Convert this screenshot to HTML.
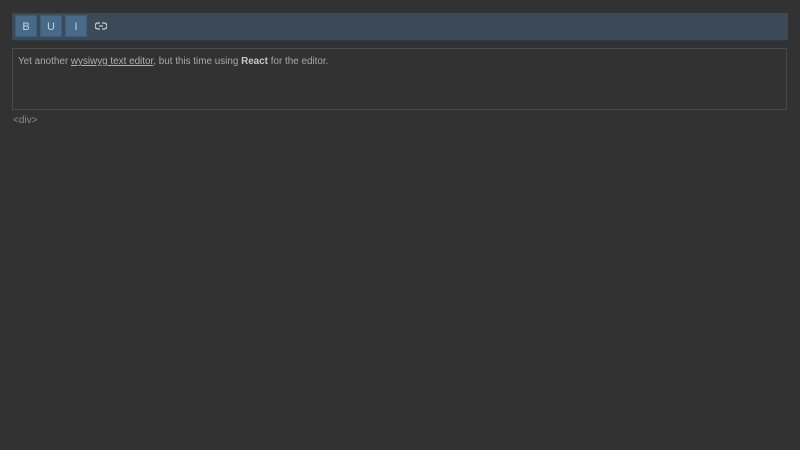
<!DOCTYPE html>
<html><head><style>
body{margin:0;width:800px;height:450px;background:#323232;font-family:"Liberation Sans",sans-serif;overflow:hidden;position:relative}
.tb{position:absolute;left:12px;top:13px;width:776px;height:27px;background:#3c4a57;border-bottom:1px solid #2e3a44}
.b{position:absolute;top:2px;width:22px;height:22px;background:#466a88;color:#c9d4dc;font-size:11px;text-align:center;line-height:22px;border:1px solid #3d5e78;box-sizing:border-box}
.ed{position:absolute;left:12px;top:48px;width:775px;height:62px;border:1px solid #4a4a4a;box-sizing:border-box}
.t{position:absolute;left:18px;top:56px;font-size:9.9px;color:#a8a8a8}
.t u{color:#b0b0b0}.t b{color:#c8c8c8}
.d{position:absolute;left:13px;top:115px;font-size:10px;color:#8a8a8a}
</style></head><body>
<div class="tb">
<div class="b" style="left:3px">B</div>
<div class="b" style="left:28px">U</div>
<div class="b" style="left:53px">I</div>
<svg style="position:absolute;left:83px;top:8px" width="12" height="10" viewBox="0 0 12 10"><path d="M5 2H3a3 3 0 0 0 0 6h2M7 2h2a3 3 0 0 1 0 6H7M4 5h4" fill="none" stroke="#c9ced2" stroke-width="1.3"/></svg>
</div>
<div class="ed"></div>
<div class="t">Yet another <u>wysiwyg text editor</u>, but this time using <b>React</b> for the editor.</div>
<div class="d">&lt;div&gt;</div>
</body></html>
